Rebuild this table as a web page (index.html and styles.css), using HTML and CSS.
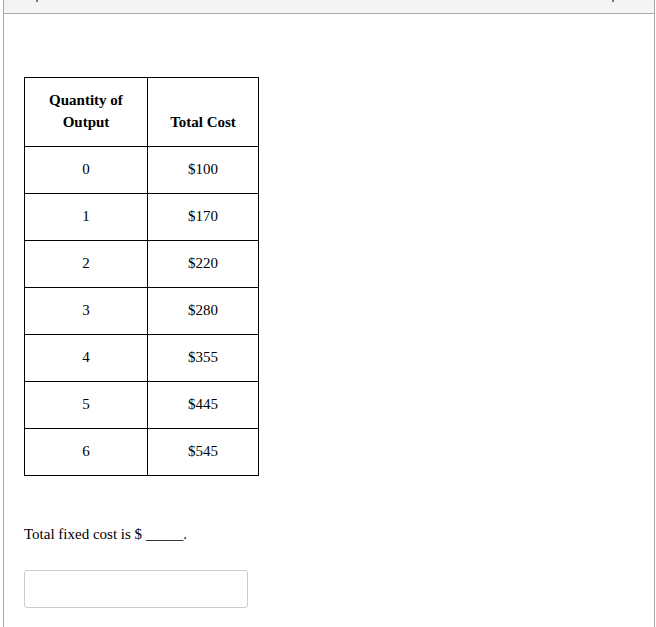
FILE: index.html
```html
<!DOCTYPE html>
<html>
<head>
<meta charset="utf-8">
<link rel="stylesheet" href="styles.css">
</head>
<body>
<div class="panel">
  <div class="panel-head"><span class="mark mark-left"></span><span class="mark mark-right"></span></div>
  <div class="panel-body">
    <table class="data">
      <thead>
        <tr><th class="c1">Quantity of<br>Output</th><th class="c2">Total Cost</th></tr>
      </thead>
      <tbody>
        <tr><td>0</td><td>$100</td></tr>
        <tr><td>1</td><td>$170</td></tr>
        <tr><td>2</td><td>$220</td></tr>
        <tr><td>3</td><td>$280</td></tr>
        <tr><td>4</td><td>$355</td></tr>
        <tr><td>5</td><td>$445</td></tr>
        <tr><td>6</td><td>$545</td></tr>
      </tbody>
    </table>
    <p class="question">Total fixed cost is $ _____.</p>
    <input class="answer" type="text">
  </div>
</div>
</body>
</html>
```
FILE: styles.css
```css
html, body {
  margin: 0;
  padding: 0;
  background: #fff;
}
body {
  font-family: "Liberation Serif", "Times New Roman", serif;
  font-size: 15px;
  color: #000;
}
.panel {
  margin: 0 1px 0 3px;
  border-left: 1px solid #aaa;
  border-right: 1px solid #aaa;
  height: 627px;
  box-sizing: border-box;
}
.panel-head {
  height: 13px;
  background: #f4f4f4;
  border-bottom: 1px solid #aaa;
  position: relative;
}
.mark {
  position: absolute;
  top: 0;
  width: 2px;
  height: 2px;
  background: #777;
}
.mark-left { left: 32px; }
.mark-right { left: 608px; }
.panel-body {
  padding: 63px 0 0 20px;
}
.data {
  border-collapse: collapse;
}
.data th, .data td {
  border: 1px solid #000;
  padding: 11px 0 13px;
  line-height: 22px;
  text-align: center;
}
.data th {
  font-weight: bold;
  vertical-align: bottom;
}
.data .c1 { width: 122px; }
.data .c2 { width: 110px; }
.question {
  margin: 47px 0 0 0;
  line-height: 22px;
}
.answer {
  display: block;
  margin-top: 25px;
  width: 224px;
  height: 38px;
  box-sizing: border-box;
  border: 1px solid #ccc;
  border-radius: 3px;
  background: #fff;
  padding: 0;
}
```
